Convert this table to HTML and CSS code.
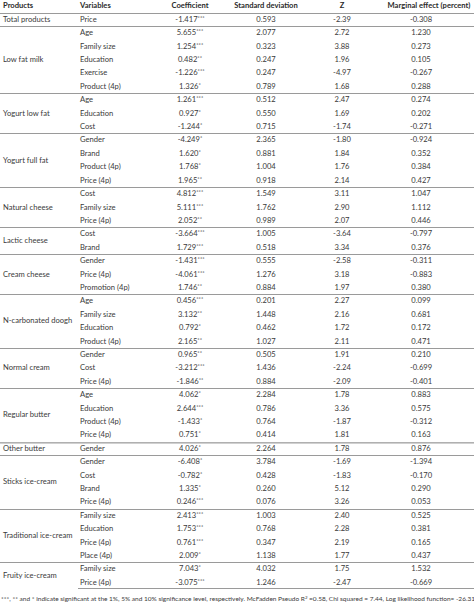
FILE: index.html
```html
<!DOCTYPE html>
<html>
<head>
<meta charset="utf-8">
<link rel="stylesheet" href="styles.css">
</head>
<body>
<table class="tbl">
<colgroup>
<col class="c1"><col class="c2"><col class="c3"><col class="c4"><col class="c5"><col class="c6">
</colgroup>
<thead>
<tr><th class="prod">Products</th><th class="var">Variables</th><th>Coefficient</th><th>Standard deviation</th><th>Z</th><th class="me">Marginal effect (percent)</th></tr>
</thead>
<tbody>
<tr class="first"><td class="prod">Total products</td><td class="var">Price</td><td>-1.417<sup>***</sup></td><td>0.593</td><td>-2.39</td><td class="me">-0.308</td></tr>

<tr class="first"><td class="prod" rowspan="5">Low fat milk</td><td class="var">Age</td><td>5.655<sup>***</sup></td><td>2.077</td><td>2.72</td><td class="me">1.230</td></tr>
<tr><td class="var">Family size</td><td>1.254<sup>***</sup></td><td>0.323</td><td>3.88</td><td class="me">0.273</td></tr>
<tr><td class="var">Education</td><td>0.482<sup>**</sup></td><td>0.247</td><td>1.96</td><td class="me">0.105</td></tr>
<tr><td class="var">Exercise</td><td>-1.226<sup>***</sup></td><td>0.247</td><td>-4.97</td><td class="me">-0.267</td></tr>
<tr><td class="var">Product (4p)</td><td>1.326<sup>*</sup></td><td>0.789</td><td>1.68</td><td class="me">0.288</td></tr>

<tr class="first"><td class="prod" rowspan="3">Yogurt low fat</td><td class="var">Age</td><td>1.261<sup>***</sup></td><td>0.512</td><td>2.47</td><td class="me">0.274</td></tr>
<tr><td class="var">Education</td><td>0.927<sup>*</sup></td><td>0.550</td><td>1.69</td><td class="me">0.202</td></tr>
<tr><td class="var">Cost</td><td>-1.244<sup>*</sup></td><td>0.715</td><td>-1.74</td><td class="me">-0.271</td></tr>

<tr class="first"><td class="prod" rowspan="4">Yogurt full fat</td><td class="var">Gender</td><td>-4.249<sup>*</sup></td><td>2.365</td><td>-1.80</td><td class="me">-0.924</td></tr>
<tr><td class="var">Brand</td><td>1.620<sup>*</sup></td><td>0.881</td><td>1.84</td><td class="me">0.352</td></tr>
<tr><td class="var">Product (4p)</td><td>1.768<sup>*</sup></td><td>1.004</td><td>1.76</td><td class="me">0.384</td></tr>
<tr><td class="var">Price (4p)</td><td>1.965<sup>**</sup></td><td>0.918</td><td>2.14</td><td class="me">0.427</td></tr>

<tr class="first"><td class="prod" rowspan="3">Natural cheese</td><td class="var">Cost</td><td>4.812<sup>***</sup></td><td>1.549</td><td>3.11</td><td class="me">1.047</td></tr>
<tr><td class="var">Family size</td><td>5.111<sup>***</sup></td><td>1.762</td><td>2.90</td><td class="me">1.112</td></tr>
<tr><td class="var">Price (4p)</td><td>2.052<sup>**</sup></td><td>0.989</td><td>2.07</td><td class="me">0.446</td></tr>

<tr class="first"><td class="prod" rowspan="2">Lactic cheese</td><td class="var">Cost</td><td>-3.664<sup>***</sup></td><td>1.005</td><td>-3.64</td><td class="me">-0.797</td></tr>
<tr><td class="var">Brand</td><td>1.729<sup>***</sup></td><td>0.518</td><td>3.34</td><td class="me">0.376</td></tr>

<tr class="first"><td class="prod" rowspan="3">Cream cheese</td><td class="var">Gender</td><td>-1.431<sup>***</sup></td><td>0.555</td><td>-2.58</td><td class="me">-0.311</td></tr>
<tr><td class="var">Price (4p)</td><td>-4.061<sup>***</sup></td><td>1.276</td><td>3.18</td><td class="me">-0.883</td></tr>
<tr><td class="var">Promotion (4p)</td><td>1.746<sup>**</sup></td><td>0.884</td><td>1.97</td><td class="me">0.380</td></tr>

<tr class="first"><td class="prod" rowspan="4">N-carbonated doogh</td><td class="var">Age</td><td>0.456<sup>***</sup></td><td>0.201</td><td>2.27</td><td class="me">0.099</td></tr>
<tr><td class="var">Family size</td><td>3.132<sup>**</sup></td><td>1.448</td><td>2.16</td><td class="me">0.681</td></tr>
<tr><td class="var">Education</td><td>0.792<sup>*</sup></td><td>0.462</td><td>1.72</td><td class="me">0.172</td></tr>
<tr><td class="var">Product (4p)</td><td>2.165<sup>**</sup></td><td>1.027</td><td>2.11</td><td class="me">0.471</td></tr>

<tr class="first"><td class="prod" rowspan="3">Normal cream</td><td class="var">Gender</td><td>0.965<sup>**</sup></td><td>0.505</td><td>1.91</td><td class="me">0.210</td></tr>
<tr><td class="var">Cost</td><td>-3.212<sup>***</sup></td><td>1.436</td><td>-2.24</td><td class="me">-0.699</td></tr>
<tr><td class="var">Price (4p)</td><td>-1.846<sup>**</sup></td><td>0.884</td><td>-2.09</td><td class="me">-0.401</td></tr>

<tr class="first"><td class="prod" rowspan="4">Regular butter</td><td class="var">Age</td><td>4.062<sup>*</sup></td><td>2.284</td><td>1.78</td><td class="me">0.883</td></tr>
<tr><td class="var">Education</td><td>2.644<sup>***</sup></td><td>0.786</td><td>3.36</td><td class="me">0.575</td></tr>
<tr><td class="var">Product (4p)</td><td>-1.433<sup>*</sup></td><td>0.764</td><td>-1.87</td><td class="me">-0.312</td></tr>
<tr><td class="var">Price (4p)</td><td>0.751<sup>*</sup></td><td>0.414</td><td>1.81</td><td class="me">0.163</td></tr>

<tr class="first thick"><td class="prod">Other butter</td><td class="var">Gender</td><td>4.026<sup>*</sup></td><td>2.264</td><td>1.78</td><td class="me">0.876</td></tr>

<tr class="first"><td class="prod" rowspan="4">Sticks ice-cream</td><td class="var">Gender</td><td>-6.408<sup>*</sup></td><td>3.784</td><td>-1.69</td><td class="me">-1.394</td></tr>
<tr><td class="var">Cost</td><td>-0.782<sup>*</sup></td><td>0.428</td><td>-1.83</td><td class="me">-0.170</td></tr>
<tr><td class="var">Brand</td><td>1.335<sup>*</sup></td><td>0.260</td><td>5.12</td><td class="me">0.290</td></tr>
<tr><td class="var">Price (4p)</td><td>0.246<sup>***</sup></td><td>0.076</td><td>3.26</td><td class="me">0.053</td></tr>

<tr class="first"><td class="prod" rowspan="4">Traditional ice-cream</td><td class="var">Family size</td><td>2.413<sup>***</sup></td><td>1.003</td><td>2.40</td><td class="me">0.525</td></tr>
<tr><td class="var">Education</td><td>1.753<sup>***</sup></td><td>0.768</td><td>2.28</td><td class="me">0.381</td></tr>
<tr><td class="var">Price (4p)</td><td>0.761<sup>***</sup></td><td>0.347</td><td>2.19</td><td class="me">0.165</td></tr>
<tr><td class="var">Place (4p)</td><td>2.009<sup>*</sup></td><td>1.138</td><td>1.77</td><td class="me">0.437</td></tr>

<tr class="first"><td class="prod" rowspan="2">Fruity ice-cream</td><td class="var">Family size</td><td>7.043<sup>*</sup></td><td>4.032</td><td>1.75</td><td class="me">1.532</td></tr>
<tr class="last"><td class="var">Price (4p)</td><td>-3.075<sup>***</sup></td><td>1.246</td><td>-2.47</td><td class="me">-0.669</td></tr>
</tbody>
</table>
<p class="note">***, ** and * indicate significant at the 1%, 5% and 10% significance level, respectively. McFadden Pseudo R<sup>2</sup> =0.58, Chi squared = 7.44, Log likelihood function= -26.31</p>
</body>
</html>
```
FILE: styles.css
```css
html, body {
  margin: 0;
  padding: 0;
  background: #ffffff;
}
body {
  width: 474px;
  overflow: hidden;
  font-family: Lato, "Open Sans", sans-serif;
  color: #3a3a3a;
}
.tbl {
  width: 474px;
  table-layout: fixed;
  border-collapse: separate;
  border-spacing: 0;
  font-size: 7.6px;
  margin-top: -0.6px;
}
.c1 { width: 78px; }
.c2 { width: 74px; }
.c3 { width: 76px; }
.c4 { width: 76px; }
.c5 { width: 76px; }
.c6 { width: 94px; }
.tbl th, .tbl td {
  height: 13.4px;
  padding: 0;
  line-height: 13.4px;
  text-align: center;
  vertical-align: middle;
  white-space: nowrap;
  overflow: visible;
}
.tbl th {
  font-weight: 700;
  color: #2a2a2a;
}
.tbl .prod {
  text-align: left;
  padding-left: 3px;
}
.tbl .var {
  text-align: left;
  padding-left: 2px;
}
.tbl td.me {
  padding-right: 12px;
}
.tbl th.me {
  padding-left: 4px;
}
.first td {
  background: linear-gradient(#9a9a9a, #9a9a9a) top left / 100% 1px no-repeat;
}
.thick td {
  background: linear-gradient(#b0b0b0, #b0b0b0) top left / 100% 1.6px no-repeat;
}
.last td {
  background: linear-gradient(#9a9a9a, #9a9a9a) bottom left / 100% 1px no-repeat;
}
.tbl sup {
  font-size: 5.6px;
  line-height: 0;
  vertical-align: 2.2px;
}
.note {
  margin: 4.5px 0 0 1px;
  font-size: 6.5px;
  line-height: 9px;
  white-space: nowrap;
  color: #3a3a3a;
}
.note sup {
  font-size: 4.4px;
  line-height: 0;
  vertical-align: 2.4px;
}
```
